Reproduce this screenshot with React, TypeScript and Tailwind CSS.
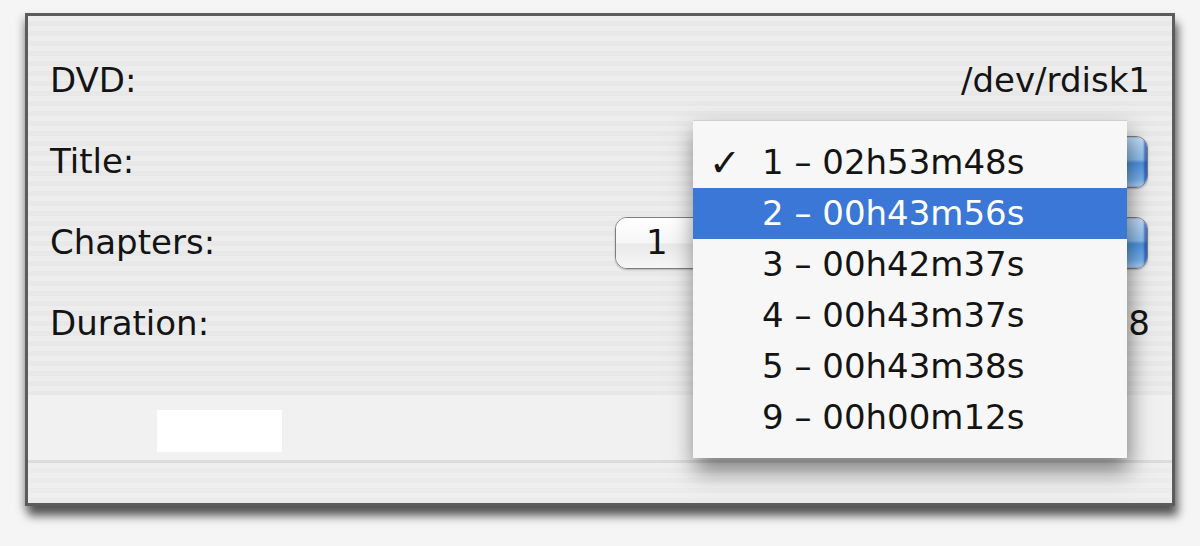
import React from "react";

function Popup({ text, width }: { text?: string; width: number }) {
  return (
    <div
      className="flex h-[52px] rounded-[12px] border-[1.5px] border-[#7d7d7d] shadow-[0_1px_2px_rgba(0,0,0,0.25)] overflow-hidden"
      style={{ width }}
    >
      <div className="flex-1 flex items-center pl-[30px] bg-[linear-gradient(180deg,#ffffff_0%,#f6f6f6_50%,#e9e9e9_52%,#f7f7f7_100%)]">
        {text}
      </div>
      <div className="w-[46px] border-l border-[#6d8fc4] bg-[linear-gradient(180deg,#c6e0fa_0%,#8fc1f0_45%,#4f95e0_52%,#79b6f0_85%,#b5d8fa_100%)] shadow-[inset_-3px_0_2px_rgba(20,60,160,0.6)]" />
    </div>
  );
}

const items = [
  "1 – 02h53m48s",
  "2 – 00h43m56s",
  "3 – 00h42m37s",
  "4 – 00h43m37s",
  "5 – 00h43m38s",
  "9 – 00h00m12s",
];

export default function App() {
  return (
    <div className="relative w-[1200px] h-[546px] overflow-hidden bg-[#f5f5f5] pt-[13px] pl-[25px] font-['Lucida_Grande','DejaVu_Sans',sans-serif] text-[34px] text-[#141414]">
      <div className="w-[1150px] h-[493px] border-[3px] border-[#5c5c5c] shadow-[3px_10px_9px_rgba(0,0,0,0.6),-3px_4px_8px_rgba(0,0,0,0.18)] flex flex-col bg-[repeating-linear-gradient(180deg,#ededed_0px,#ededed_5px,#e8e8e8_5px,#e8e8e8_10px)]">
        <div className="pt-[24px] pl-[22px] pr-[22px]">
          <div className="h-[81px] flex items-center justify-between">
            <span>DVD:</span>
            <span>/dev/rdisk1</span>
          </div>
          <div className="h-[81px] flex items-center justify-between">
            <span>Title:</span>
            <div className="mr-[2px]">
              <Popup width={390} />
            </div>
          </div>
          <div className="h-[81px] flex items-center justify-between">
            <span>Chapters:</span>
            <div className="flex items-center gap-[60px] mr-[2px]">
              <Popup text="1" width={160} />
              <Popup width={313} />
            </div>
          </div>
          <div className="h-[81px] flex items-center justify-between">
            <span>Duration:</span>
            <span>8</span>
          </div>
        </div>
        <div className="h-[31px]" />
        <div className="h-[65px] bg-[#f1f1f1] pt-[15px] pl-[129px]">
          <div className="w-[125px] h-[42px] bg-white" />
        </div>
        <div className="h-[3px] bg-[#dcdcdc]" />
        <div className="flex-1 bg-[repeating-linear-gradient(180deg,#efefef_0px,#efefef_5px,#ebebeb_5px,#ebebeb_10px)]" />
      </div>

      <div className="absolute left-[693px] top-[120px] w-[434px] h-[338px] bg-[#f7f7f7] border-t border-[#d0d0d0] shadow-[2px_12px_22px_rgba(0,0,0,0.5)] py-[16px]">
        {items.map((t, i) => (
          <div
            key={t}
            className={
              i === 1
                ? "relative h-[51px] flex items-center pl-[69px] bg-[#3a77d6] text-white"
                : "relative h-[51px] flex items-center pl-[69px]"
            }
          >
            {i === 0 && (
              <span className="absolute left-[16px] text-[38px] font-bold leading-none">✓</span>
            )}
            {t}
          </div>
        ))}
      </div>
    </div>
  );
}
